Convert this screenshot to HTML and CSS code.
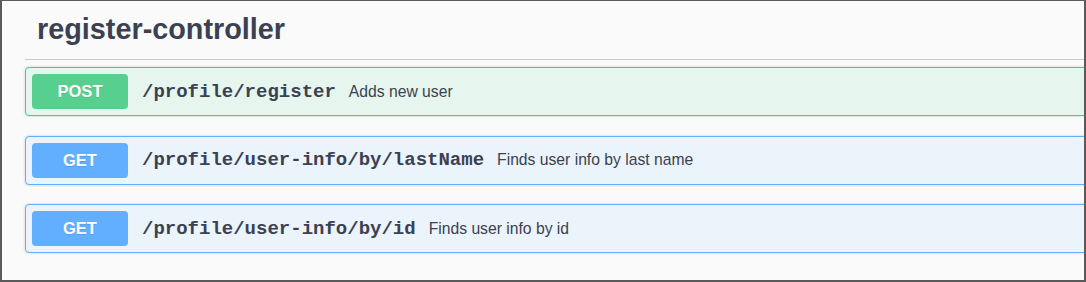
FILE: index.html
```html
<!DOCTYPE html>
<html>
<head>
<meta charset="utf-8">
<link rel="stylesheet" href="styles.css">
</head>
<body>
<div class="frame">
  <div class="section">
    <h4 class="tag">register-controller</h4>
    <div class="ops">
      <div class="op op-post">
        <span class="method">POST</span>
        <span class="path">/profile/register</span>
        <span class="desc">Adds new user</span>
      </div>
      <div class="op op-get">
        <span class="method">GET</span>
        <span class="path">/profile/user-info/by/lastName</span>
        <span class="desc">Finds user info by last name</span>
      </div>
      <div class="op op-get">
        <span class="method">GET</span>
        <span class="path">/profile/user-info/by/id</span>
        <span class="desc">Finds user info by id</span>
      </div>
    </div>
  </div>
</div>
</body>
</html>
```

FILE: styles.css
```css
html, body {
  margin: 0;
  padding: 0;
  background: #fafafa;
}
.frame {
  box-sizing: border-box;
  width: 1086px;
  height: 282px;
  border-style: solid;
  border-color: #5a5a5a;
  border-width: 1px 2px 2px 2px;
  background: #fafafa;
  overflow: hidden;
}
.section {
  padding-left: 23px;
  width: 1100px;
}
.tag {
  margin: 0;
  box-sizing: border-box;
  height: 59px;
  padding: 10px 0 0 12px;
  font-family: "Liberation Sans", Arial, sans-serif;
  font-weight: 700;
  font-size: 28.8px;
  line-height: 36px;
  color: #3b4151;
  border-bottom: 1px solid #c9c9cc;
}
.ops {
  padding-top: 7px;
  display: flex;
  flex-direction: column;
  gap: 19.5px;
}
.op {
  box-sizing: border-box;
  height: 49px;
  display: flex;
  align-items: center;
  padding: 0 6px;
  border: 1px solid;
  border-radius: 4px;
  box-shadow: 0 0 3px rgba(0, 0, 0, 0.19);
}
.op-post {
  background: #e6f6ee;
  border-color: #49cc90;
}
.op-get {
  background: #ebf3fb;
  border-color: #61affe;
}
.method {
  box-sizing: border-box;
  width: 96px;
  height: 35px;
  display: flex;
  align-items: center;
  justify-content: center;
  border-radius: 4px;
  color: #fff;
  font-family: "Liberation Sans", Arial, sans-serif;
  font-weight: 700;
  font-size: 16.5px;
  text-shadow: 0 1px 0 rgba(0, 0, 0, 0.1);
}
.op-post .method {
  background: #57cf8f;
}
.op-get .method {
  background: #61affe;
}
.path {
  padding: 0 13px 0 14px;
  font-family: "Liberation Mono", "Courier New", monospace;
  font-weight: 700;
  font-size: 19px;
  color: #3b4151;
}
.desc {
  font-family: "Liberation Sans", Arial, sans-serif;
  font-size: 15.7px;
  color: #3b4151;
}
```
